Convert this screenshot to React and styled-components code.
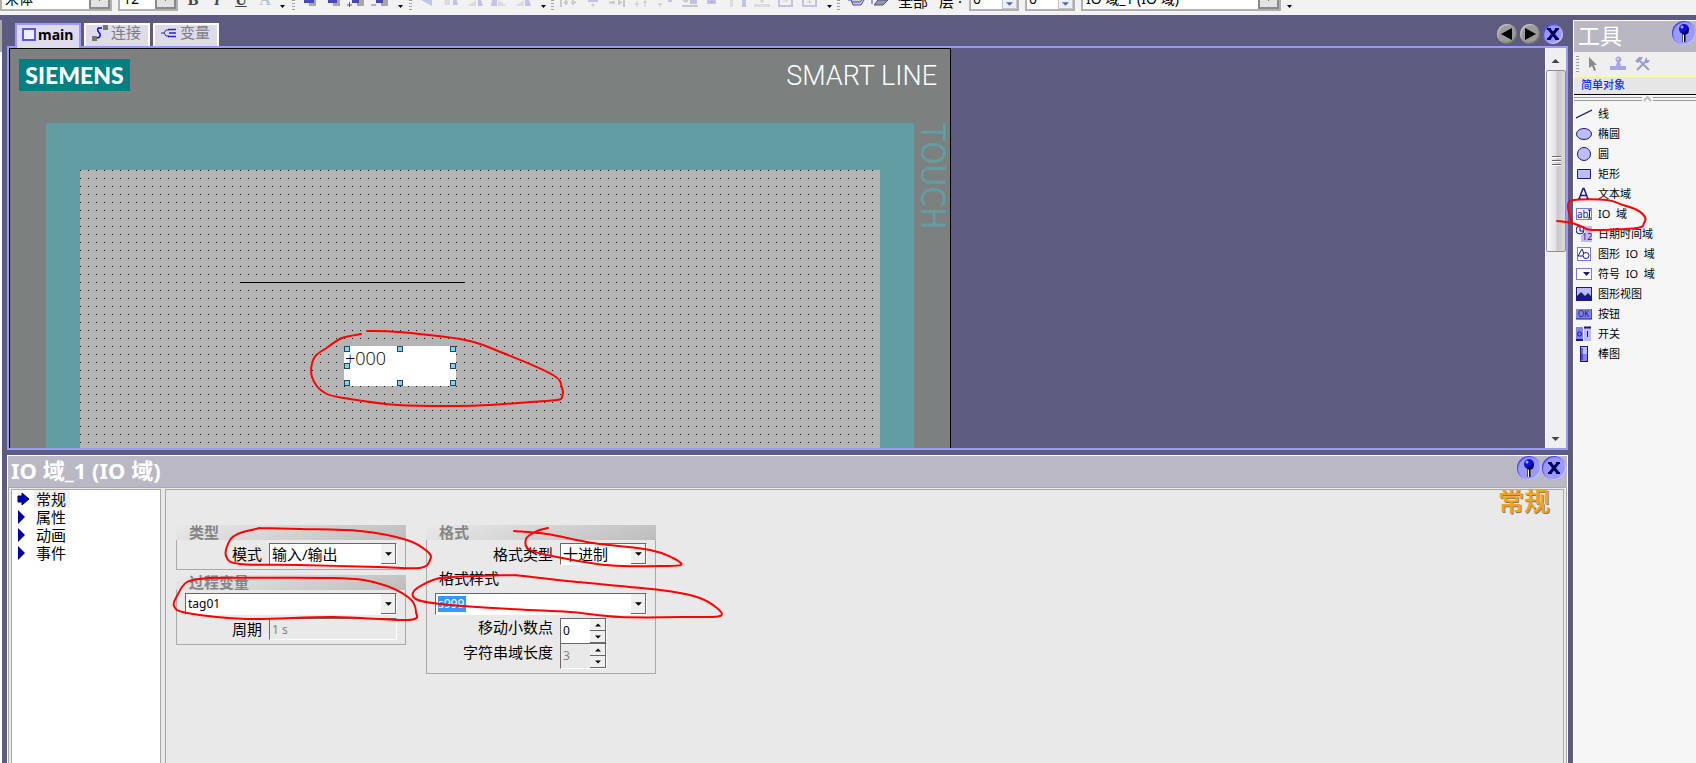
import React from 'react';
import styled, { createGlobalStyle, css } from 'styled-components';

const GlobalStyle = createGlobalStyle`
    * {
        box-sizing: border-box;
    }

    body {
        margin: 0;
        background: #5d5b80;
        color: #000;
        font-family: 'Noto Sans', 'Noto Sans CJK SC', sans-serif;
        font-size: 15px;
        line-height: 18px;
    }

    button, input, select {
        margin: 0;
        padding: 0;
        border: 0;
        border-radius: 0;
        background: none;
        color: inherit;
        font: inherit;
    }
`

const Page = styled.div`
    position: relative;
    display: flex;
    flex-direction: column;
    height: 100vh;
    overflow: hidden;
`

/* ---------- top toolbar ---------- */

const TopBar = styled.header`
    display: flex;
    align-items: flex-end;
    flex: none;
    height: 15px;
    overflow: hidden;
    background: #f2f2f2;
    white-space: nowrap;
`

const BarField = styled.label`
    display: flex;
    flex: none;
    width: ${props => props.$width}px;
    height: 24px;
    margin: 0 ${props => props.$gap || 6}px 4px 0;
    border: 2px solid #b0b0b0;
    background: #fff;
`

const BarSelect = styled.select`
    appearance: none;
    flex: 1;
    min-width: 0;
    padding-left: 3px;
    font-size: 14px;
`

const BarInput = styled.input`
    flex: 1;
    min-width: 0;
    padding-left: 2px;
    font-size: 14px;
`

const BarDrop = styled.span`
    display: flex;
    align-items: center;
    justify-content: center;
    width: 21px;
    border: 2px solid #8a8a8a;
    background: #e2e2e2;
`

const BarSpin = styled.span`
    display: flex;
    align-items: flex-end;
    justify-content: center;
    width: 15px;
    padding-bottom: 2px;
    border: 1px solid #c4c4cc;
    background: #eef0f8;
`

const BarButton = styled.button`
    display: block;
    flex: none;
    width: 24px;
    height: 15px;

    svg {
        display: block;
    }
`

const BarLetter = styled.button`
    flex: none;
    width: 24px;
    height: 19px;
    margin-bottom: 6px;
    color: ${props => props.$faded ? '#b9c4d2' : '#444'};
    font-family: 'Liberation Serif', serif;
    font-size: 16px;
    font-weight: bold;
    font-style: ${props => props.$italic ? 'italic' : 'normal'};
    text-decoration: ${props => props.$underline ? 'underline' : 'none'};
`

const BarText = styled.button`
    flex: none;
    height: 20px;
    margin: 0 7px 4px 4px;
    font-size: 15px;
`

const BarMore = styled.button`
    flex: none;
    width: 12px;
    height: 15px;

    svg {
        display: block;
    }
`

const Grip = styled.span`
    flex: none;
    width: 3px;
    height: ${props => props.$tall ? 17 : 10}px;
    margin: 0 ${props => props.$right || 6}px ${props => props.$tall ? 0 : 5}px ${props => props.$left || 0}px;
    background: repeating-linear-gradient(#a0a0a0 0 1px, transparent 1px 3px);
`

/* ---------- main area ---------- */

const Body = styled.div`
    display: flex;
    flex: 1;
    min-height: 0;
`

const LeftEdge = styled.div`
    width: 2px;
    margin-top: 5px;
    background: linear-gradient(#a9a9a9 0 32px, #fff 32px);
`

const Workspace = styled.main`
    display: flex;
    flex: 1;
    flex-direction: column;
    min-width: 0;
    padding-left: 5px;
`

const TabRow = styled.nav`
    display: flex;
    align-items: flex-end;
    gap: 3px;
    height: 31px;
    padding: 0 5px 0 8px;
`

const Tab = styled.button`
    display: flex;
    align-items: center;
    gap: 2px;
    width: 66px;
    height: ${props => props.$active ? 25 : 23}px;
    margin-bottom: ${props => props.$active ? -2 : 0}px;
    padding: 0 5px ${props => props.$active ? 4 : 8}px;
    border: 2px solid ${props => props.$active ? '#9999ff' : '#fff'};
    border-bottom: 0;
    background: #dedcea;
    color: ${props => props.$active ? '#000' : '#7c7c86'};
    font-size: ${props => props.$active ? 14 : 15}px;
    font-weight: ${props => props.$active ? 'bold' : 'normal'};
    line-height: 16px;
    white-space: nowrap;
    z-index: 1;

    svg {
        flex: none;
        margin-top: ${props => props.$active ? 0 : 3}px;
    }
`

const TabButtons = styled.div`
    display: flex;
    gap: 3px;
    margin: 0 0 2px auto;
`

const Round = styled.button`
    display: flex;
    align-items: center;
    justify-content: center;
    width: ${props => props.$size || 20}px;
    height: ${props => props.$size || 20}px;
    border-radius: 50%;
    background: ${props => props.$grey ? '#9b9b9b' : '#9999ff'};
    box-shadow: inset 1px 1px 1px ${props => props.$grey ? '#c9c9c9' : '#4040e8'}, inset -1px -1px 1px ${props => props.$grey ? '#666' : '#c8c8ff'};
`

const Editor = styled.section`
    display: flex;
    flex: none;
    height: 404px;
    border: 2px solid #9999ff;
`

const Stage = styled.div`
    flex: 1;
    overflow: hidden;
`

const Device = styled.div`
    display: flex;
    flex-direction: column;
    width: 942px;
    height: 600px;
    border: 1px solid #000;
    background: #7c807f;
`

const DeviceHead = styled.div`
    display: flex;
    align-items: flex-start;
    justify-content: space-between;
    height: 74px;
    padding: 10px 13px 0 9px;
`

const Brand = styled.div`
    width: 111px;
    height: 32px;
    background: #008080;
    color: #fff;
    font-family: Lato, sans-serif;
    font-size: 23px;
    font-weight: 900;
    line-height: 32px;
    text-align: center;
`

const Model = styled.div`
    color: #fff;
    font-family: Roboto, sans-serif;
    font-size: 27px;
    font-weight: 300;
    line-height: 34px;
`

const DeviceBody = styled.div`
    display: flex;
    flex: 1;
    padding-left: 36px;
`

const Bezel = styled.div`
    width: 868px;
    padding: 47px 34px 0;
    background: #629da3;
`

const Touch = styled.div`
    width: 36px;
    color: #629da3;
    font-family: 'Liberation Sans Narrow', 'DejaVu Sans Condensed', 'Liberation Sans', sans-serif;
    font-size: 33px;
    line-height: 36px;
    writing-mode: vertical-rl;
`

const Screen = styled.div`
    position: relative;
    height: 100%;
    background: #b4b4b4 conic-gradient(from 0deg at 1px 1px, transparent 0 75%, #000 75%) 0 0 / 8px 8px;
`

const ScreenLine = styled.div`
    position: absolute;
    top: 112px;
    left: 160px;
    width: 225px;
    height: 1px;
    background: #000;
`

const IoField = styled.div`
    position: absolute;
    top: 176px;
    left: 264px;
    width: 112px;
    height: 40px;
    padding: 0 1px;
    background: #fff;
    font-family: 'Open Sans', sans-serif;
    font-size: 18px;
    font-weight: 300;
    line-height: 24px;
`

const Handle = styled.i`
    position: absolute;
    top: ${props => props.$y}px;
    left: ${props => props.$x}px;
    width: 6px;
    height: 6px;
    border: 1px solid #244a50;
    background: #87cefa;
`

const Scroll = styled.div`
    display: flex;
    flex-direction: column;
    width: 21px;
    background: #efefef;
    border-left: 1px solid #fff;
`

const ScrollArrow = styled.button`
    height: 22px;
    padding: 0 2px 6px 0;
`

const Thumb = styled.div`
    display: flex;
    align-items: center;
    justify-content: center;
    height: 182px;
    margin-bottom: auto;
    border: 1px solid #8e8e8e;
    border-radius: 2px;
    background: linear-gradient(90deg, #fafafa, #e4e4e6 45%, #c8c8cc 60%, #dcdcdf);

    span {
        width: 9px;
        height: 11px;
        background: repeating-linear-gradient(#666 0 1px, #fff 1px 2px, transparent 2px 4px);
    }
`

/* ---------- property inspector ---------- */

const Inspector = styled.section`
    display: flex;
    flex: 1;
    flex-direction: column;
    min-height: 0;
    margin-top: 5px;
    border: 1px solid #fff;
    border-bottom: 0;
    background: #e9e9e9;
`

const TitleBar = styled.div`
    display: flex;
    align-items: flex-start;
    gap: 1px;
    height: 31px;
    padding: 0 1px 0 3px;
    background: #b9b8c4;
`

const Title = styled.h2`
    flex: 1;
    margin: 0;
    color: #fff;
    font-size: 22px;
    line-height: 28px;
`

const Panes = styled.div`
    display: flex;
    flex: 1;
    gap: 4px;
    padding: 1px 2px 0;
    border: solid #a9a9a9;
    border-width: 1px 1px 0;
`

const Tree = styled.ul`
    width: 150px;
    margin: 0;
    padding: 0 0 0 5px;
    border: 1px solid #a9a9a9;
    border-bottom: 0;
    background: #fff;
    list-style: none;
`

const TreeItem = styled.li`
    display: flex;
    align-items: center;
    gap: 4px;
    height: 18px;
`

const TreeButton = styled.button`
    height: 18px;
    padding: 0 4px 0 2px;
    background: ${props => props.$active ? '#f0f0f0' : 'none'};
    line-height: 16px;
`

const Form = styled.div`
    display: flex;
    flex: 1;
    align-items: flex-start;
    justify-content: space-between;
    border: 1px solid #a9a9a9;
    border-bottom: 0;
`

const Groups = styled.div`
    display: grid;
    grid-template-columns: 230px 230px;
    align-items: start;
    gap: 20px;
    padding: 35px 0 0 10px;
`

const Column = styled.div`
    display: flex;
    flex-direction: column;
    gap: 5px;
`

const Group = styled.fieldset`
    display: flex;
    flex-direction: column;
    gap: 3px;
    min-width: 0;
    margin: 0;
    padding: 0 8px ${props => props.$tall ? 8 : 4}px;
    border: 1px solid #a9a9a9;
    border-top: 0;
`

const GroupTitle = styled.legend`
    float: left;
    width: calc(100% + 18px);
    height: 15px;
    margin: 0 -9px;
    padding: 0 0 0 13px;
    background: linear-gradient(160deg, #e9e9e9, #bdbdbd);
    color: #868686;
    font-size: 15px;
    font-weight: bold;
    line-height: 15px;
`

const Line = styled.div`
    display: flex;
    align-items: center;
    justify-content: flex-end;
    gap: 7px;
    height: 22px;
`

const Caption = styled.label`
    white-space: nowrap;
`

const Heading = styled.label`
    height: 22px;
    padding-left: 4px;
    line-height: 20px;
`

const sunken = css`
    border: 1px solid #fff;
    border-top-color: #696969;
    border-left-color: #696969;
`

const Drop = styled.span`
    display: grid;
    width: ${props => props.$width ? props.$width + 'px' : '100%'};
    height: 22px;
    ${sunken}
    background: #fff;

    > * {
        grid-area: 1 / 1;
    }
`

const DropSelect = styled.select`
    appearance: none;
    padding: 0 20px 1px 2px;
    font-size: ${props => props.$small ? 12 : 15}px;
`

const DropInput = styled.input`
    align-self: center;
    width: 28px;
    height: 16px;
    margin-left: 2px;
    background: #3399ff;
    color: #fff;
    font-size: 12px;
`

const DropArrow = styled.span`
    display: flex;
    align-items: center;
    justify-content: center;
    justify-self: end;
    width: 15px;
    border: solid #696969;
    border-width: 0 1px 1px 0;
    background: #f0f0f0;
    pointer-events: none;
`

const Field = styled.input`
    width: 128px;
    height: 22px;
    padding-left: 2px;
    ${sunken}
    color: #838383;
    font-size: 12px;
`

const SpinRow = styled(Line)`
    align-items: flex-start;
    height: 25px;
    margin-bottom: -3px;
    padding-right: 40px;
`

const Spinner = styled.span`
    display: flex;
    width: 47px;
    height: 26px;
    ${sunken}
    background: ${props => props.$off ? '#e9e9e9' : '#fff'};
    color: ${props => props.$off ? '#838383' : '#000'};
`

const SpinInput = styled.input`
    width: 29px;
    padding-left: 2px;
    font-size: 12px;
`

const SpinButtons = styled.span`
    display: grid;
    grid-template-rows: 1fr 1fr;
    width: 16px;

    button {
        display: flex;
        align-items: center;
        justify-content: center;
        border: solid #696969;
        border-width: 0 1px 1px 0;
        background: #f0f0f0;
    }
`

const Watermark = styled.strong`
    padding-right: 13px;
    color: #f5a21b;
    font-size: 26px;
    font-weight: 500;
    line-height: 22px;
    text-shadow: 1px 1px 0 #8a7a5a;
`

/* ---------- tool box ---------- */

const ToolBox = styled.aside`
    display: flex;
    flex: none;
    flex-direction: column;
    width: 123px;
    margin: 5px 0 0 5px;
    border: solid #fff;
    border-width: 1px 0 0 1px;
    background: #f6f6f6;
`

const ToolHead = styled.div`
    display: flex;
    align-items: flex-start;
    justify-content: space-between;
    height: 31px;
    padding-left: 4px;
    background: #b9b8c2;
`

const ToolTitle = styled.h2`
    margin: 0;
    color: #fff;
    font-size: 22px;
    font-weight: normal;
    line-height: 28px;
`

const ToolBar = styled.div`
    display: flex;
    align-items: center;
    height: 24px;
    padding-left: 2px;
    background: #efefef;
`

const ToolAction = styled.button`
    width: 25px;
    height: 20px;

    svg {
        display: block;
        margin: 0 auto;
    }
`

const ToolSection = styled.button`
    height: 19px;
    padding: 0 0 2px 7px;
    border-top: 1px solid #ffffa0;
    border-bottom: 1px solid #000;
    background: #e6e6e6;
    color: #0030ff;
    font-size: 11px;
    font-weight: 500;
    line-height: 14px;
    text-align: left;
`

const Fold = styled.div`
    height: 9px;

    svg {
        display: block;
        width: 100%;
    }
`

const ToolList = styled.ul`
    margin: 0;
    padding: 0 0 0 2px;
    list-style: none;
`

const ToolItem = styled.button`
    display: flex;
    align-items: center;
    gap: 6px;
    height: 20px;
    font-size: 11px;
    line-height: 16px;
    white-space: pre;
`

const Ink = styled.svg`
    position: absolute;
    top: 0;
    ${props => props.$right ? 'right: 0;' : 'left: 0;'}
    width: ${props => props.$right ? '150px' : '100%'};
    height: 100%;
    fill: none;
    stroke: #f00;
    stroke-width: 2;
    stroke-linecap: round;
    pointer-events: none;
`

// smooth line through all the points
const smooth = points => {
    let d = `M${points[0]}`;
    for (let i = 0; i < points.length - 1; i++) {
        const a = points[i - 1] || points[i];
        const b = points[i];
        const c = points[i + 1];
        const e = points[i + 2] || c;
        d += `C${b[0] + (c[0] - a[0]) / 6},${b[1] + (c[1] - a[1]) / 6} ${c[0] - (e[0] - b[0]) / 6},${c[1] - (e[1] - b[1]) / 6} ${c}`;
    }
    return d;
};

const marks = [
    [[361, 334], [342, 338], [328, 347], [314, 358], [312, 377], [325, 393], [350, 399], [398, 405], [457, 406], [490, 405], [530, 402], [557, 400], [562, 397], [562, 388], [553, 375], [503, 353], [465, 340], [398, 332], [367, 331]],
    [[260, 528], [300, 529], [360, 531], [407, 540], [428, 552], [430, 560], [420, 568], [377, 567], [300, 565], [240, 564], [226, 556], [230, 540], [240, 533], [260, 528]],
    [[208, 578], [333, 578], [377, 583], [408, 597], [416, 612], [408, 620], [333, 617], [247, 619], [187, 613], [174, 606], [177, 596], [187, 582], [208, 578]],
    [[548, 528], [537, 531], [526, 539], [530, 550], [557, 557], [597, 564], [623, 566], [660, 566], [681, 565], [673, 558], [650, 550], [593, 543], [547, 534], [514, 531]],
    [[515, 575], [453, 577], [433, 580], [414, 591], [418, 600], [450, 605], [510, 609], [570, 612], [620, 617], [693, 617], [720, 616], [717, 608], [697, 597], [660, 590], [567, 581], [515, 575]],
];

const toolMark = [[11, 221], [26, 223], [37, 227], [47, 230], [91, 228], [98, 223], [99, 217], [91, 210], [77, 205], [61, 200], [28, 200], [22, 206], [26, 223]];

const Arrow = ({ up, size = 7, color = '#000' }) => (
    <svg width={size} height="4" viewBox="0 0 8 4">
        <path d={up ? 'M0 4L4 0L8 4Z' : 'M0 0L4 4L8 0Z'} fill={color} />
    </svg>
);

const More = () => (
    <BarMore aria-label="more">
        <svg width="12" height="15"><path d="M3 5H8L5.500 8Z" fill="#000" /></svg>
    </BarMore>
);

const Pin = () => (
    <svg width="14" height="20" viewBox="0 0 14 20">
        <path d="M7 9V19" stroke="#000" strokeWidth="3" />
        <path d="M6.500 9V19" stroke="#fff" strokeWidth="1" />
        <circle cx="7" cy="6" r="5" fill="#1010d8" />
        <path d="M3 9Q8 12 11 4Q14 11 7 12Z" fill="#000050" />
        <circle cx="5" cy="4" r="1.500" fill="#a8a8ff" />
    </svg>
);

const Cross = () => (
    <svg width="14" height="12" viewBox="0 0 14 12">
        <path d="M1 1H5M9 1H13M1 11H5M9 11H13" stroke="#00005a" strokeWidth="2" />
        <path d="M3 1L11 11M11 1L3 11" stroke="#00005a" strokeWidth="3" />
    </svg>
);

// only the lower edge of these icons shows under the window frame
const layerIcons = [
    <><path d="M13 0H17V6H10V3H13Z" fill="#a6a6a6" /><path d="M5 0H15V3H5Z" fill="#4848b8" /></>,
    <><path d="M10 0H17V6H10Z" fill="#a6a6a6" /><path d="M5 0H14V3H5Z" fill="#4848b8" /></>,
    <><path d="M10 0H17V6H10Z" fill="#a6a6a6" /><path d="M5 0H12V3H5Z" fill="#4848b8" /><path d="M0 5H5M2.500 2V7" stroke="#555" /></>,
    <><path d="M10 0H17V6H10Z" fill="#a6a6a6" /><path d="M5 0H12V3H5Z" fill="#4848b8" /><path d="M0 5H5" stroke="#777" /></>,
];

const flipIcons = [
    <path d="M3 0H14V6Z" fill="#c2c2e4" />,
    <><path d="M3 0H8V5H2Z" fill="#dcdcdc" /><path d="M11 0H15L16 5H11Z" fill="#c2c2e4" /></>,
    <><path d="M1 6L10 0V6Z" fill="#dcdcdc" /><path d="M12 0H15L17 6H12Z" fill="#c2c2e4" /></>,
    <><path d="M2 0H7V6H1Z" fill="#c2c2e4" /><path d="M8 0L17 6H8Z" fill="#dcdcdc" /></>,
    <><path d="M1 6L10 0V6Z" fill="#dcdcdc" /><path d="M11 0H15L17 6H11Z" fill="#c2c2e4" /></>,
];

const alignIcons = [
    <path d="M1 0V7M4 2.500H8M11 2.500H16M13 0V5M6 0V5" stroke="#c9c9c9" strokeWidth="2" />,
    <><path d="M4 0H14V2H4Z" fill="#c2c2e4" /><path d="M7 5L9 3L11 5L9 7Z" fill="#cfcfcf" /></>,
    <path d="M1 2.500H7M10 2.500H14M16 0V7M5 1V4M11 0V5" stroke="#c9c9c9" strokeWidth="2" />,
    <path d="M5 1V7M13 0V7M3 4H7M11 2H15" stroke="#c9c9c9" />,
    <><path d="M4 3V7M2 4H6" stroke="#c9c9c9" /><path d="M12 0H16V2H12Z" fill="#c2c2e4" /></>,
    <><path d="M2 5H18V7H2ZM2 0H9L6 3Z" fill="#c9c9c9" /><path d="M10 0H17V4H10Z" fill="#c2c2e4" /></>,
    <><path d="M3 0H12V4H3Z" fill="#c2c2e4" /><path d="M6 1H10L8 3Z" fill="#aaa" /></>,
    <><path d="M2 0H5V7H2Z" fill="#dcdcdc" /><path d="M14 0H18V7H14Z" fill="#c2c2e4" /></>,
    <><path d="M2 4H18V7H2Z" fill="#dcdcdc" /><path d="M10 0V3M8 1H12" stroke="#c9c9c9" /></>,
    <><path d="M3 0V6H16V0" fill="none" stroke="#c2c2e4" strokeWidth="2" /><path d="M7 1H12" stroke="#ccc" /></>,
    <><path d="M3 0V6H16V0" fill="none" stroke="#c2c2e4" strokeWidth="2" /><path d="M9.500 0V4M7 2H12" stroke="#ccc" /></>,
];

const layerTools = [
    <path d="M2 0H5L7 5H15L18 0M6 2H14L16 0" fill="#ccc" stroke="#4848b8" />,
    <path d="M2 0V4M4 5H13L18 0H8Z" fill="#999" stroke="#4848b8" />,
];

const IconRow = ({ icons, name }) => icons.map((icon, index) => (
    <BarButton key={index} aria-label={`${name} ${index + 1}`}>
        <svg width="24" height="15">{icon}</svg>
    </BarButton>
));

const line = '#1a1a78';
const fill = '#bcbcff';

const tools = [
    { label: '线', icon: <path d="M0 12L16 4" stroke={line} strokeWidth="1.300" /> },
    { label: '椭圆', icon: <ellipse cx="8" cy="8" rx="7.500" ry="5.500" fill={fill} stroke={line} /> },
    { label: '圆', icon: <circle cx="8" cy="8" r="6.500" fill={fill} stroke={line} /> },
    { label: '矩形', icon: <path d="M1.500 3.500H14.500V12.500H1.500Z" fill={fill} stroke={line} /> },
    { label: '文本域', icon: <path d="M3 13L7 2.500H8L12 13M4.500 9.500H10.500M2 13H5M10 13H13" fill="none" stroke={line} strokeWidth="1.500" /> },
    { label: 'IO  域', icon: <><rect x="0.500" y="2.500" width="15" height="11" fill="#fff" stroke="#7777ee" /><text x="1" y="12" fontSize="10" fill={line}>ab</text><path d="M12 4H15M13.500 4V12M12 12H15" stroke={line} /></> },
    { label: '日期时间域', icon: <><circle cx="4" cy="4" r="4" fill="#e4e4ff" stroke={line} /><path d="M4 1V5H7" fill="none" stroke={line} /><path d="M9 0H16V16H5V9H9Z" fill={fill} /><text x="6" y="14" fontSize="9" fill={line}>12</text></> },
    { label: '图形  IO  域', icon: <><rect x="1.500" y="1.500" width="13" height="13" fill="#fff" stroke="#7777ee" /><path d="M2 10L6 3L9 10Z" fill="none" stroke={line} /><circle cx="10" cy="9.500" r="3" fill="#fff" stroke={line} /></> },
    { label: '符号  IO  域', icon: <><rect x="0.500" y="2.500" width="15" height="11" fill="#fff" stroke="#7777ee" /><path d="M7 6H14L10.500 10Z" fill={line} /></> },
    { label: '图形视图', icon: <><path d="M0 1H16V15H0Z" fill="#1a1a78" /><path d="M1 2H15V10L12 7L9 10L5 6L1 10Z" fill={fill} /></> },
    { label: '按钮', icon: <><path d="M0 3H16V13H0Z" fill="#8080f8" /><path d="M0 13H16V3" fill="none" stroke={line} /><text x="2" y="11" fontSize="8" fill={line}>OK</text></> },
    { label: '开关', icon: <><path d="M0 1H7V15H0Z" fill="#8080f8" /><path d="M8 1H15V15H8Z" fill={fill} /><path d="M0 14H7M8 1.500H15" stroke={line} strokeWidth="2" /><circle cx="3.500" cy="8" r="2" fill="none" stroke={line} /><path d="M11.500 5V11" stroke={line} /></> },
    { label: '棒图', icon: <><rect x="4.500" y="0.500" width="7" height="15" fill="#8080f8" stroke={line} /><path d="M5 1H11V8H5Z" fill={fill} /><path d="M5 3H7M5 5H7M5 7H7M5 9H7M5 11H7M5 13H7" stroke={line} /></> },
];

const TreeIcon = ({ active }) => (
    <svg width="13" height="16" viewBox="0 0 13 16">
        {active
            ? <path d="M1 5H5V2L12 8L5 14V11H1Z" fill="#0000b8" stroke="#000060" />
            : <path d="M1 1V15L8 8Z" fill="#0000a0" />}
    </svg>
);

const Dropdown = ({ id, width, value, small }) => (
    <Drop $width={width}>
        <DropSelect id={id} $small={small} defaultValue={value} aria-label={value}>
            <option>{value}</option>
        </DropSelect>
        <DropArrow><Arrow /></DropArrow>
    </Drop>
);

const Stepper = ({ id, value, off }) => (
    <Spinner $off={off}>
        <SpinInput id={id} defaultValue={value} disabled={off} />
        <SpinButtons>
            <button aria-label="up"><Arrow up size={6} /></button>
            <button aria-label="down"><Arrow size={6} /></button>
        </SpinButtons>
    </Spinner>
);

const handles = [[0, 0], [53, 0], [106, 0], [0, 17], [106, 17], [0, 34], [53, 34], [106, 34]];

const App = () => {
    return (
        <Page>
            <GlobalStyle />
            <TopBar>
                <BarField $width={112}>
                    <BarSelect aria-label="字体"><option>宋体</option></BarSelect>
                    <BarDrop><Arrow /></BarDrop>
                </BarField>
                <BarField $width={60} $gap={3}>
                    <BarSelect aria-label="字号"><option>12</option></BarSelect>
                    <BarDrop><Arrow /></BarDrop>
                </BarField>
                <BarLetter>B</BarLetter>
                <BarLetter $italic>I</BarLetter>
                <BarLetter $underline>U</BarLetter>
                <BarLetter $faded>A</BarLetter>
                <More />
                <Grip $left={3} $right={4} />
                <IconRow icons={layerIcons} name="layer" />
                <More />
                <Grip $left={2} $right={6} />
                <IconRow icons={flipIcons} name="flip" />
                <More />
                <Grip $left={1} $right={6} />
                <IconRow icons={alignIcons} name="align" />
                <More />
                <Grip $left={1} $right={6} />
                <IconRow icons={layerTools} name="order" />
                <BarText>全部</BarText>
                <BarText>层 ·</BarText>
                <BarField $width={50}>
                    <BarInput defaultValue="0" aria-label="from" />
                    <BarSpin><Arrow color="#4a68b8" /></BarSpin>
                </BarField>
                <BarField $width={50}>
                    <BarInput defaultValue="0" aria-label="to" />
                    <BarSpin><Arrow color="#4a68b8" /></BarSpin>
                </BarField>
                <BarField $width={200} $gap={3}>
                    <BarSelect aria-label="对象"><option>IO 域_1 (IO 域)</option></BarSelect>
                    <BarDrop><Arrow /></BarDrop>
                </BarField>
                <More />
            </TopBar>

            <Body>
                <LeftEdge />
                <Workspace>
                    <TabRow>
                        <Tab $active>
                            <svg width="14" height="13"><rect x="1" y="1" width="12" height="11" fill="#eeeeff" stroke="#5858f0" strokeWidth="2" /></svg>
                            main
                        </Tab>
                        <Tab>
                            <svg width="18" height="16">
                                <path d="M11 3H8Q6 3 7 6L9 9Q10 13 5 13" fill="none" stroke="#00f" strokeWidth="1.500" />
                                <path d="M12 0H17V5H12ZM1 11H6V16H1Z" fill="#6f7674" />
                            </svg>
                            连接
                        </Tab>
                        <Tab>
                            <svg width="18" height="12">
                                <path d="M1 6H4M9 3H6L4 6L6 9H9" fill="none" stroke="#3030a0" />
                                <path d="M8 2.500H16M9 6H16M8 9.500H16" stroke="#2525c8" strokeWidth="1.500" />
                            </svg>
                            变量
                        </Tab>
                        <TabButtons>
                            <Round $grey aria-label="previous"><svg width="12" height="12"><path d="M11 0V12L0 6Z" /></svg></Round>
                            <Round $grey aria-label="next"><svg width="12" height="12"><path d="M1 0V12L12 6Z" /></svg></Round>
                            <Round aria-label="close"><Cross /></Round>
                        </TabButtons>
                    </TabRow>

                    <Editor>
                        <Stage>
                            <Device>
                                <DeviceHead>
                                    <Brand>SIEMENS</Brand>
                                    <Model>SMART LINE</Model>
                                </DeviceHead>
                                <DeviceBody>
                                    <Bezel>
                                        <Screen>
                                            <ScreenLine />
                                            <IoField>
                                                +000
                                                {handles.map(([x, y]) => <Handle key={`${x}-${y}`} $x={x} $y={y} />)}
                                            </IoField>
                                        </Screen>
                                    </Bezel>
                                    <Touch>TOUCH</Touch>
                                </DeviceBody>
                            </Device>
                        </Stage>
                        <Scroll>
                            <ScrollArrow aria-label="scroll up"><Arrow up size={9} color="#444" /></ScrollArrow>
                            <Thumb><span /></Thumb>
                            <ScrollArrow aria-label="scroll down"><Arrow size={9} color="#444" /></ScrollArrow>
                        </Scroll>
                    </Editor>

                    <Inspector>
                        <TitleBar>
                            <Title>IO 域_1 (IO 域)</Title>
                            <Round $size={24} aria-label="pin"><Pin /></Round>
                            <Round $size={24} aria-label="close"><Cross /></Round>
                        </TitleBar>
                        <Panes>
                            <Tree>
                                {['常规', '属性', '动画', '事件'].map((name, index) => (
                                    <TreeItem key={name}>
                                        <TreeIcon active={index === 0} />
                                        <TreeButton $active={index === 0}>{name}</TreeButton>
                                    </TreeItem>
                                ))}
                            </Tree>
                            <Form>
                                <Groups>
                                    <Column>
                                        <Group>
                                            <GroupTitle>类型</GroupTitle>
                                            <Line>
                                                <Caption htmlFor="mode">模式</Caption>
                                                <Dropdown id="mode" width={128} value="输入/输出" />
                                            </Line>
                                        </Group>
                                        <Group>
                                            <GroupTitle>过程变量</GroupTitle>
                                            <Dropdown id="tag" value="tag01" small />
                                            <Line>
                                                <Caption htmlFor="cycle">周期</Caption>
                                                <Field id="cycle" defaultValue="1 s" disabled />
                                            </Line>
                                        </Group>
                                    </Column>
                                    <Group $tall>
                                        <GroupTitle>格式</GroupTitle>
                                        <Line>
                                            <Caption htmlFor="format">格式类型</Caption>
                                            <Dropdown id="format" width={87} value="十进制" />
                                        </Line>
                                        <Heading htmlFor="pattern">格式样式</Heading>
                                        <Drop>
                                            <DropInput id="pattern" defaultValue="s999" />
                                            <DropArrow><Arrow /></DropArrow>
                                        </Drop>
                                        <SpinRow>
                                            <Caption htmlFor="shift">移动小数点</Caption>
                                            <Stepper id="shift" value="0" />
                                        </SpinRow>
                                        <SpinRow>
                                            <Caption htmlFor="length">字符串域长度</Caption>
                                            <Stepper id="length" value="3" off />
                                        </SpinRow>
                                    </Group>
                                </Groups>
                                <Watermark>常规</Watermark>
                            </Form>
                        </Panes>
                    </Inspector>
                </Workspace>

                <ToolBox>
                    <ToolHead>
                        <ToolTitle>工具</ToolTitle>
                        <Round $size={24} aria-label="pin"><Pin /></Round>
                    </ToolHead>
                    <ToolBar>
                        <Grip $tall $right={1} />
                        <ToolAction aria-label="select">
                            <svg width="10" height="16"><path d="M1 1V12L4 10L6 15L8 14L6 9H9Z" fill="#8a8a8a" /></svg>
                        </ToolAction>
                        <ToolAction aria-label="stamp">
                            <svg width="16" height="16"><path d="M0 10H6L7 6A3 3 0 1 1 10 6L11 10H16V14H0Z" fill="#a6a6e0" /><circle cx="8" cy="3" r="1" fill="#e4e4ff" /></svg>
                        </ToolAction>
                        <ToolAction aria-label="settings">
                            <svg width="16" height="16">
                                <path d="M2 14L12 4M4 4L14 14" stroke="#9c9cd4" strokeWidth="2" />
                                <path d="M0 5L4 1H8L6 4L3 7ZM10 3L12 1V4H15L13 7H10Z" fill="#9c9cd4" />
                            </svg>
                        </ToolAction>
                    </ToolBar>
                    <ToolSection>简单对象</ToolSection>
                    <Fold>
                        <svg height="8" viewBox="0 0 122 8" preserveAspectRatio="none">
                            <path d="M0 2.500H122M0 5.500H122" stroke="#999" />
                            <path d="M68 0H79V8H68Z" fill="#f6f6f6" />
                            <path d="M70 6L73.500 2L77 6" fill="none" stroke="#bbb" strokeWidth="2" />
                        </svg>
                    </Fold>
                    <ToolList>
                        {tools.map(tool => (
                            <li key={tool.label}>
                                <ToolItem>
                                    <svg width="16" height="16">{tool.icon}</svg>
                                    {tool.label}
                                </ToolItem>
                            </li>
                        ))}
                    </ToolList>
                </ToolBox>
            </Body>

            <Ink>{marks.map((points, index) => <path key={index} d={smooth(points)} />)}</Ink>
            <Ink $right><path d={smooth(toolMark)} /></Ink>
        </Page>
    );
}

export default App;
